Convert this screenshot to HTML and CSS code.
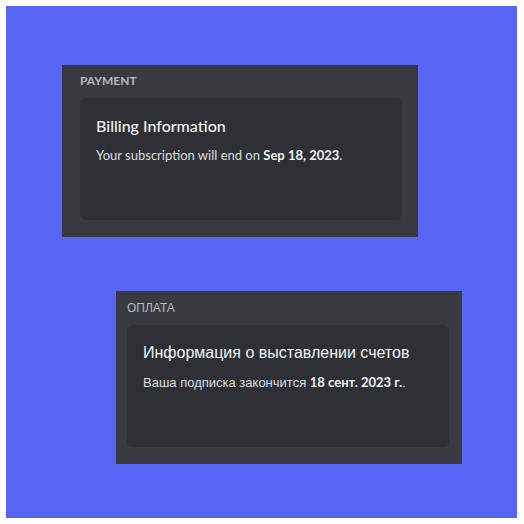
FILE: index.html
```html
<!DOCTYPE html>
<html lang="en">
<head>
    <meta charset="UTF-8">
    <meta name="viewport" content="width=device-width, initial-scale=1.0">
    <title>Billing</title>
    <link rel="stylesheet" href="styles.css">
</head>
<body>
    <div class="stage">
        <section class="card card-en">
            <h2 class="label">Payment</h2>
            <div class="box">
                <h3 class="title">Billing Information</h3>
                <p class="text">Your subscription will end on <b>Sep 18, 2023</b>.</p>
            </div>
        </section>

        <section class="card card-ru" lang="ru">
            <h2 class="label">Оплата</h2>
            <div class="box">
                <h3 class="title">Информация о выставлении счетов</h3>
                <p class="text">Ваша подписка закончится <b>18 сент. 2023 г.</b>.</p>
            </div>
        </section>
    </div>
</body>
</html>
```

FILE: styles.css
```css
* {
    box-sizing: border-box;
}
body {
    margin: 0;
    background: #fff;
    font-family: Lato, "Noto Sans", sans-serif;
}
.stage {
    margin: 6px;
    width: 511px;
    height: 512px;
    background: #5865f2;
    padding-top: 59px;
    overflow: hidden;
}
.card {
    background: #383a40;
    height: 172px;
}
.card-en {
    width: 356px;
    margin-left: 56px;
    padding: 8px 16px 0 18px;
}
.card-ru {
    width: 346px;
    height: 173px;
    margin-left: 110px;
    margin-top: 54px;
    padding: 9px 13px 0 11px;
}
.label {
    margin: 0;
    height: 25px;
    font-size: 12px;
    line-height: 16px;
    font-weight: 700;
    text-transform: uppercase;
    color: #b5bac1;
}
.box {
    background: #2e3035;
    border-radius: 6px;
    height: 122px;
    padding: 18px 16px 0;
}
.title {
    margin: 0 0 10px;
    font-size: 16px;
    line-height: 20px;
    font-weight: 500;
    color: #f2f3f5;
}
.text {
    margin: 0;
    font-size: 13px;
    line-height: 18px;
    color: #dbdee1;
}
.text b {
    font-weight: 700;
    color: #f2f3f5;
}
.card-ru .label {
    font-family: "Liberation Sans", Arial, sans-serif;
    font-weight: 400;
}
.card-ru .title {
    font-family: "Liberation Sans", Arial, sans-serif;
}
.card-ru .text {
    font-family: "Liberation Sans", Arial, sans-serif;
}
.card-ru .text b {
    font-family: Lato, sans-serif;
}
```
